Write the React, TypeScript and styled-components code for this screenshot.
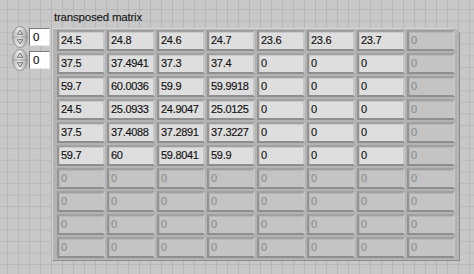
import React from "react";
import styled, { createGlobalStyle } from "styled-components";

const Global = createGlobalStyle`
  html, body {
    margin: 0;
    padding: 0;
    width: 474px;
    height: 274px;
    overflow: hidden;
    background-color: #c8c8c8;
    background-image:
      linear-gradient(to right, #b7b7b7 1px, transparent 1px),
      linear-gradient(to bottom, #b9b9b9 1px, transparent 1px);
    background-size: 11px 11.6px;
    background-position: 7px 9px;
    font-family: "Liberation Sans", Arial, sans-serif;
  }
`;

const Page = styled.div`
  display: flex;
  align-items: flex-start;
  padding: 9px 0 0 12px;
  gap: 2px;
`;

const IndexColumn = styled.div`
  display: flex;
  flex-direction: column;
  gap: 1px;
  margin-top: 17px;
`;

const IndexRow = styled.div`
  display: flex;
  align-items: center;
  height: 22px;
  gap: 1px;
`;

const IndexBox = styled.div`
  width: 21px;
  height: 18px;
  box-sizing: border-box;
  background: #ffffff;
  border-top: 1px solid #7a7a7a;
  border-left: 1px solid #7a7a7a;
  border-right: 1px solid #e8e8e8;
  border-bottom: 1px solid #e8e8e8;
  font-size: 11.5px;
  color: #0c0c0c;
  -webkit-text-stroke: 0.15px #0c0c0c;
  padding: 2px 0 0 3px;
  line-height: 13px;
`;

const MatrixColumn = styled.div`
  display: flex;
  flex-direction: column;
`;

const Label = styled.div`
  height: 17px;
  font-size: 11.5px;
  line-height: 13px;
  padding: 2px 0 0 2px;
  color: #141414;
  -webkit-text-stroke: 0.1px #141414;
  letter-spacing: -0.2px;
`;

const Frame = styled.div`
  width: 408px;
  height: 233px;
  box-sizing: border-box;
  background: #b3b3b3;
  border-top: 1px solid #d6d6d6;
  border-left: 1px solid #d0d0d0;
  border-right: 1px solid #8d8d8d;
  border-bottom: 1px solid #8d8d8d;
  padding: 1px 4px 0 4px;
  clip-path: polygon(0 0, calc(100% - 5px) 0, 100% 5px, 100% 100%, 0 100%);
  display: grid;
  grid-template-columns: repeat(8, 48px);
  grid-auto-rows: 21px;
  column-gap: 2px;
  row-gap: 2px;
`;

const Cell = styled.div<{ $disabled?: boolean }>`
  box-sizing: border-box;
  border-top: 2px solid #a0a0a0;
  border-left: 2px solid #939393;
  border-right: 2px solid #c6c6c6;
  border-bottom: 2px solid #8e8e8e;
  background: ${(p) => (p.$disabled ? "#c4c4c4" : "#dedede")};
  box-shadow: inset 1px 1px 0 ${(p) => (p.$disabled ? "#b6b6b6" : "#c9c9c9")};
  color: ${(p) => (p.$disabled ? "#8c8c8c" : "#111111")};
  -webkit-text-stroke: 0.15px ${(p) => (p.$disabled ? "#8c8c8c" : "#111111")};
  font-size: 11px;
  letter-spacing: -0.3px;
  line-height: 17px;
  padding-left: 2px;
  white-space: nowrap;
  overflow: hidden;
`;

function Spinner() {
  return (
    <svg width="16" height="22" viewBox="0 0 16 22">
      <defs>
        <linearGradient id="sg" x1="0" y1="0" x2="1" y2="0">
          <stop offset="0" stopColor="#b8b8b8" />
          <stop offset="0.45" stopColor="#ececec" />
          <stop offset="1" stopColor="#a4a4a4" />
        </linearGradient>
      </defs>
      <ellipse cx="8" cy="11" rx="7.4" ry="10.5" fill="url(#sg)" stroke="#888" strokeWidth="0.8" />
      <line x1="1.5" y1="11" x2="14.5" y2="11" stroke="#8f8f8f" strokeWidth="0.8" />
      <path d="M8 4 L10.7 8.4 L5.3 8.4 Z" fill="#d8d8d8" stroke="#5e5e5e" strokeWidth="0.8" />
      <path d="M8 18 L10.7 13.6 L5.3 13.6 Z" fill="#d8d8d8" stroke="#5e5e5e" strokeWidth="0.8" />
    </svg>
  );
}

const rows: string[][] = [
  ["24.5", "24.8", "24.6", "24.7", "23.6", "23.6", "23.7"],
  ["37.5", "37.4941", "37.3", "37.4", "0", "0", "0"],
  ["59.7", "60.0036", "59.9", "59.9918", "0", "0", "0"],
  ["24.5", "25.0933", "24.9047", "25.0125", "0", "0", "0"],
  ["37.5", "37.4088", "37.2891", "37.3227", "0", "0", "0"],
  ["59.7", "60", "59.8041", "59.9", "0", "0", "0"],
];

export default function App() {
  const cells: React.ReactNode[] = [];
  for (let r = 0; r < 10; r++) {
    for (let c = 0; c < 8; c++) {
      const data = rows[r];
      const enabled = !!data && c < 7;
      cells.push(
        <Cell key={`${r}-${c}`} $disabled={!enabled}>
          {enabled ? data[c] : "0"}
        </Cell>
      );
    }
  }
  return (
    <>
      <Global />
      <Page>
        <IndexColumn>
          <IndexRow>
            <Spinner />
            <IndexBox>0</IndexBox>
          </IndexRow>
          <IndexRow>
            <Spinner />
            <IndexBox>0</IndexBox>
          </IndexRow>
        </IndexColumn>
        <MatrixColumn>
          <Label>transposed matrix</Label>
          <Frame>{cells}</Frame>
        </MatrixColumn>
      </Page>
    </>
  );
}
